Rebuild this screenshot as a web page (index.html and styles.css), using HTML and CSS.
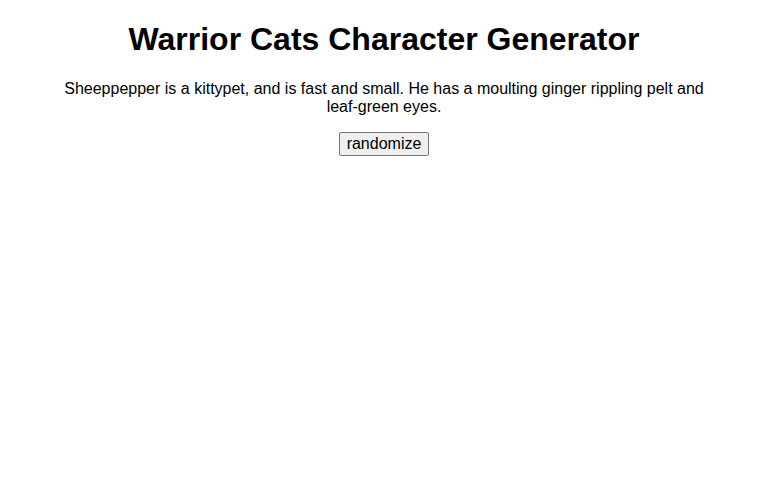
FILE: index.html
```html
<!DOCTYPE html>
<html>
<head>
<meta charset="utf-8">
<link rel="stylesheet" href="styles.css">
</head>
<body>
<div class="app">
<h1 class="title">Warrior Cats Character Generator</h1>
<p class="desc">Sheeppepper is a kittypet, and is fast and small. He has a moulting ginger rippling pelt and leaf-green eyes.</p>
<button class="btn">randomize</button>
</div>
</body>
</html>
```
FILE: styles.css
```css
body {
  margin: 0;
  font-family: "Liberation Sans", Arial, sans-serif;
}
.app {
  text-align: center;
  padding: 0 56px;
}
.title {
  font-size: 32px;
  font-weight: bold;
  margin: 21.44px 0;
}
.desc {
  font-size: 16px;
  margin: 16px 0;
}
.btn {
  font-family: "Liberation Sans", Arial, sans-serif;
  font-size: 16px;
  padding: 2px 7px;
  background: #efefef;
  border: 1px solid #767676;
  border-radius: 2px;
  color: #000;
}
```
